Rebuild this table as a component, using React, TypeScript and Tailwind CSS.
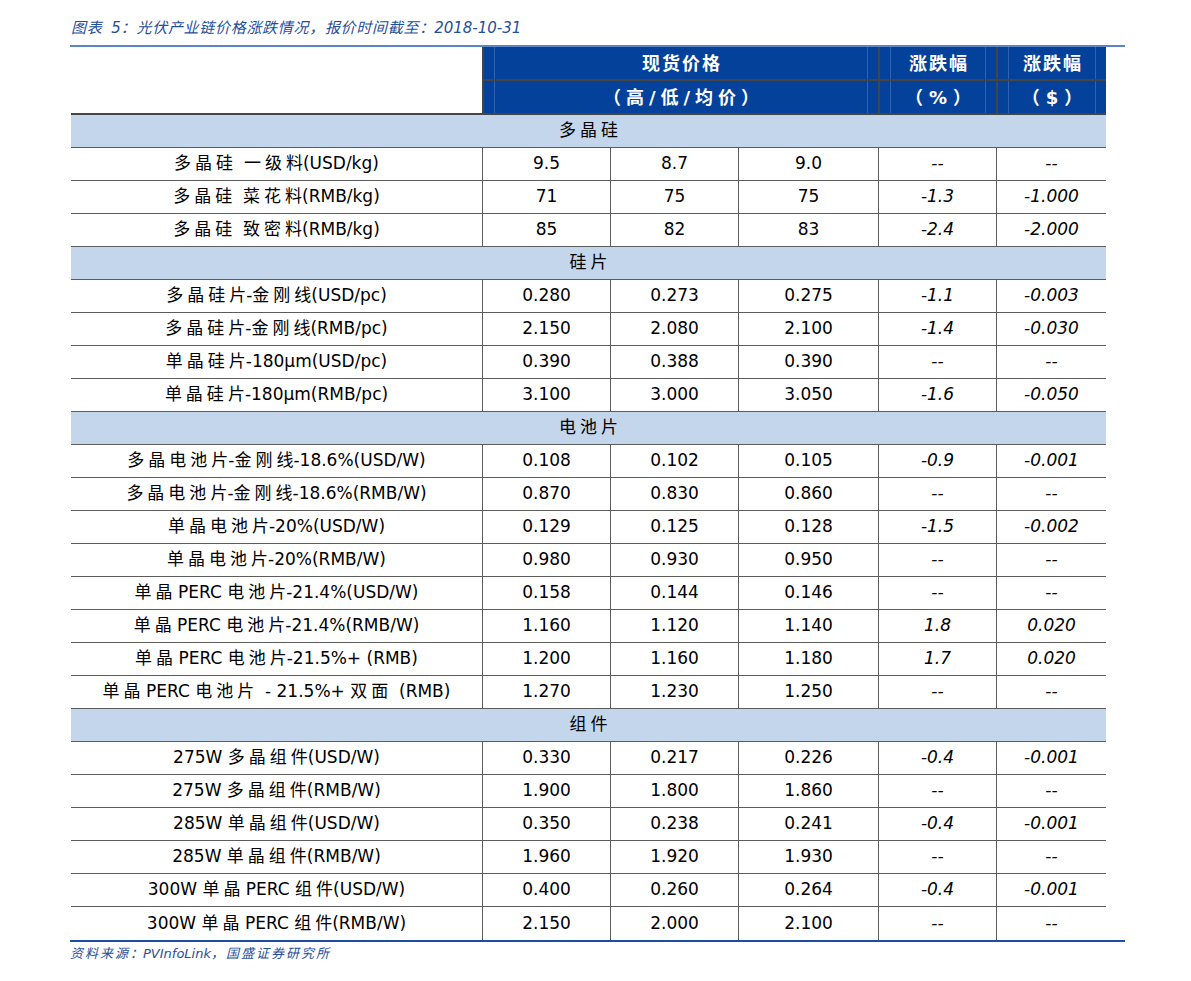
import React from 'react';

type Row = [string, string, string, string, string, string];

const SECTIONS: { title: string; rows: Row[] }[] = [
  {
    title: '多晶硅',
    rows: [
      ['多晶硅  一级料(USD/kg)', '9.5', '8.7', '9.0', '--', '--'],
      ['多晶硅  菜花料(RMB/kg)', '71', '75', '75', '-1.3', '-1.000'],
      ['多晶硅  致密料(RMB/kg)', '85', '82', '83', '-2.4', '-2.000'],
    ],
  },
  {
    title: '硅片',
    rows: [
      ['多晶硅片-金刚线(USD/pc)', '0.280', '0.273', '0.275', '-1.1', '-0.003'],
      ['多晶硅片-金刚线(RMB/pc)', '2.150', '2.080', '2.100', '-1.4', '-0.030'],
      ['单晶硅片-180μm(USD/pc)', '0.390', '0.388', '0.390', '--', '--'],
      ['单晶硅片-180μm(RMB/pc)', '3.100', '3.000', '3.050', '-1.6', '-0.050'],
    ],
  },
  {
    title: '电池片',
    rows: [
      ['多晶电池片-金刚线-18.6%(USD/W)', '0.108', '0.102', '0.105', '-0.9', '-0.001'],
      ['多晶电池片-金刚线-18.6%(RMB/W)', '0.870', '0.830', '0.860', '--', '--'],
      ['单晶电池片-20%(USD/W)', '0.129', '0.125', '0.128', '-1.5', '-0.002'],
      ['单晶电池片-20%(RMB/W)', '0.980', '0.930', '0.950', '--', '--'],
      ['单晶 PERC 电池片-21.4%(USD/W)', '0.158', '0.144', '0.146', '--', '--'],
      ['单晶 PERC 电池片-21.4%(RMB/W)', '1.160', '1.120', '1.140', '1.8', '0.020'],
      ['单晶 PERC 电池片-21.5%+ (RMB)', '1.200', '1.160', '1.180', '1.7', '0.020'],
      ['单晶 PERC 电池片  - 21.5%+ 双面  (RMB)', '1.270', '1.230', '1.250', '--', '--'],
    ],
  },
  {
    title: '组件',
    rows: [
      ['275W 多晶组件(USD/W)', '0.330', '0.217', '0.226', '-0.4', '-0.001'],
      ['275W 多晶组件(RMB/W)', '1.900', '1.800', '1.860', '--', '--'],
      ['285W 单晶组件(USD/W)', '0.350', '0.238', '0.241', '-0.4', '-0.001'],
      ['285W 单晶组件(RMB/W)', '1.960', '1.920', '1.930', '--', '--'],
      ['300W 单晶 PERC 组件(USD/W)', '0.400', '0.260', '0.264', '-0.4', '-0.001'],
      ['300W 单晶 PERC 组件(RMB/W)', '2.150', '2.000', '2.100', '--', '--'],
    ],
  },
];

const CJK_SPLIT = /([\u3000-\u303f\u4e00-\u9fff\uff00-\uffef]+)/;
const CJK_TEST = /^[\u3000-\u303f\u4e00-\u9fff\uff00-\uffef]+$/;

// CJK runs get letter spacing between their glyphs (not after the last one), latin stays tight
const Mixed: React.FC<{ text: string; cjk: string }> = ({ text, cjk }) => (
  <>
    {text.split(CJK_SPLIT).map((part, i) =>
      CJK_TEST.test(part) ? (
        <span key={i}>
          <span className={cjk}>{part.slice(0, -1)}</span>
          {part.slice(-1)}
        </span>
      ) : (
        <span key={i} className="whitespace-pre">{part}</span>
      )
    )}
  </>
);

const GRID = 'grid grid-cols-[411px_128px_128px_140px_118px_110px]';
const LINE = 'border-[#5c5c5c]';

const HeadCell: React.FC<{ className?: string; children: React.ReactNode }> = ({ className = '', children }) => (
  <div className={`h-[34px] bg-[#03419b] px-[10px] border-l-2 border-b-2 border-[#454545] ${className}`}>
    <div className="h-full flex items-center justify-center border-x border-[#2e62b3] text-white font-bold text-[18px]">
      {children}
    </div>
  </div>
);

const App: React.FC = () => {
  return (
    <div className="min-h-screen bg-white pl-[70px] pt-[18px]" style={{ fontFamily: '"DejaVu Sans", "Noto Sans CJK SC", sans-serif' }}>
      <div className="h-[20px] leading-[20px] text-[15px] italic text-[#1f4e9d] pl-[1px]">
        <Mixed text="图表  5：光伏产业链价格涨跌情况，报价时间截至：2018-10-31" cjk="tracking-[0.7px]" />
      </div>

      <div className="mt-[7px] w-[1055px] border-t-2 border-[#5b86c6] border-b-2 border-b-[#1a4fa3]">
        <div className="w-[1036px] pl-[1px]">
          {/* header */}
          <div className={`${GRID} grid-rows-[34px_34px]`}>
            <div className="row-span-2 bg-white border-b-2 border-[#454545]" />
            <HeadCell className="col-span-3">
              <Mixed text="现货价格" cjk="tracking-[2px]" />
            </HeadCell>
            <HeadCell>
              <Mixed text="涨跌幅" cjk="tracking-[2px]" />
            </HeadCell>
            <HeadCell>
              <Mixed text="涨跌幅" cjk="tracking-[2px]" />
            </HeadCell>
            <HeadCell className="col-span-3">
              <span className="tracking-[5px]">（高/低/均价</span>）
            </HeadCell>
            <HeadCell>
              <span className="tracking-[6px]">（%</span>）
            </HeadCell>
            <HeadCell>
              <span className="tracking-[6px]">（$</span>）
            </HeadCell>
          </div>

          {/* body */}
          {SECTIONS.map((sec, si) => (
            <div key={sec.title} className={GRID}>
              <div className={`col-span-6 h-[33px] flex items-center justify-center bg-[#c3d6ec] text-[17px] text-black border-b ${LINE}`}>
                <Mixed text={sec.title} cjk="tracking-[4px]" />
              </div>
              {sec.rows.map((row, ri) => {
                const last = si === SECTIONS.length - 1 && ri === sec.rows.length - 1;
                return row.map((cell, ci) => (
                  <div
                    key={`${ri}-${ci}`}
                    className={`h-[33px] flex items-center justify-center text-[17px] text-black ${LINE} ${last ? '' : 'border-b'} ${ci > 0 ? 'border-l' : ''} ${ci > 3 ? 'italic' : ''}`}
                  >
                    {ci === 0 ? <Mixed text={cell} cjk="tracking-[4px]" /> : cell}
                  </div>
                ));
              })}
            </div>
          ))}
        </div>
      </div>

      <div className="mt-[2px] text-[13px] italic text-[#1f4e9d] leading-[20px]">
        <Mixed text="资料来源：PVInfoLink，国盛证券研究所" cjk="tracking-[2px]" />
      </div>
    </div>
  );
};

export default App;
